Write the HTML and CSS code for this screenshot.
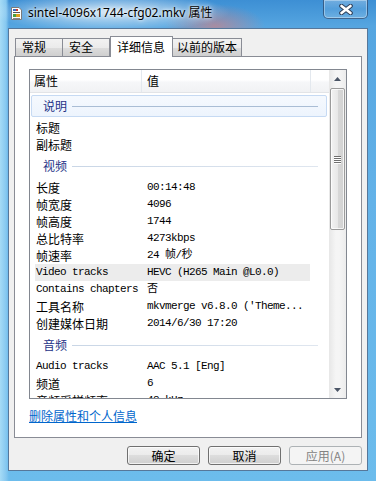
FILE: index.html
```html
<!DOCTYPE html>
<html lang="zh-CN">
<head>
<meta charset="utf-8">
<title>sintel-4096x1744-cfg02.mkv 属性</title>
<link rel="stylesheet" href="styles.css">
</head>
<body>
<div class="window">
  <div class="titlebar">
    <svg class="appicon" viewBox="0 0 13 13" width="13" height="13">
      <path d="M1.5 0.5 H9 L11.5 3 V12.5 H1.5 Z" fill="#fff" stroke="#7a7a7a"/>
      <rect x="3" y="2" width="3" height="2" fill="#3a6fc4"/>
      <rect x="6" y="2" width="2" height="2" fill="#d03a2a"/>
      <rect x="3" y="5" width="7" height="1" fill="#555"/>
      <rect x="3" y="7" width="3" height="3" fill="#4aa040"/>
      <rect x="6" y="7" width="4" height="3" fill="#e0a020"/>
      <rect x="3" y="11" width="7" height="1" fill="#888"/>
    </svg>
    <span class="title">sintel-4096x1744-cfg02.mkv 属性</span>
    <div class="close">
      <svg viewBox="0 0 14 11" width="14" height="11">
        <path d="M2.5 2 L11.5 9 M11.5 2 L2.5 9" stroke="#2d3e58" stroke-width="4.6" stroke-linecap="round"/>
        <path d="M2.5 2 L11.5 9 M11.5 2 L2.5 9" stroke="#ffffff" stroke-width="2.6" stroke-linecap="round"/>
      </svg>
    </div>
  </div>

  <div class="client">
    <div class="tabs">
      <div class="tab">常规</div>
      <div class="tab">安全</div>
      <div class="tab active">详细信息</div>
      <div class="tab wide">以前的版本</div>
    </div>

    <div class="panel">
      <div class="listview">
        <div class="lv-main">
          <div class="lv-header">
            <div class="hcol h1">属性</div>
            <div class="hcol h2">值</div>
            <div class="hcol h3"></div>
          </div>
          <div class="lv-body">
            <div class="group hot"><div class="gbox"><span class="glabel">说明</span><span class="gline"></span></div></div>
            <div class="row"><span class="c1">标题</span><span class="c2"></span></div>
            <div class="row"><span class="c1">副标题</span><span class="c2"></span></div>

            <div class="group"><div class="gbox"><span class="glabel">视频</span><span class="gline"></span></div></div>
            <div class="row"><span class="c1">长度</span><span class="c2 mono">00:14:48</span></div>
            <div class="row"><span class="c1">帧宽度</span><span class="c2 mono">4096</span></div>
            <div class="row"><span class="c1">帧高度</span><span class="c2 mono">1744</span></div>
            <div class="row"><span class="c1">总比特率</span><span class="c2 mono">4273kbps</span></div>
            <div class="row"><span class="c1">帧速率</span><span class="c2 mono">24 帧/秒</span></div>
            <div class="row sel"><span class="c1 mono">Video tracks</span><span class="c2 mono">HEVC (H265 Main @L0.0)</span></div>
            <div class="row"><span class="c1 mono">Contains chapters</span><span class="c2 mono">否</span></div>
            <div class="row"><span class="c1">工具名称</span><span class="c2 mono">mkvmerge v6.8.0 ('Theme...</span></div>
            <div class="row"><span class="c1">创建媒体日期</span><span class="c2 mono">2014/6/30 17:20</span></div>

            <div class="group"><div class="gbox"><span class="glabel">音频</span><span class="gline"></span></div></div>
            <div class="row"><span class="c1 mono">Audio tracks</span><span class="c2 mono">AAC 5.1 [Eng]</span></div>
            <div class="row"><span class="c1">频道</span><span class="c2 mono">6</span></div>
            <div class="row"><span class="c1">音频采样频率</span><span class="c2 mono">48 kHz</span></div>
          </div>
        </div>
        <div class="scrollbar">
          <div class="sb-btn">
            <svg viewBox="0 0 7 4" width="7" height="4"><path d="M0 4 L3.5 0 L7 4 Z" fill="#4b5566"/></svg>
          </div>
          <div class="sb-track">
            <div class="sb-thumb">
              <div class="grip"><span></span><span></span><span></span><span></span></div>
            </div>
          </div>
          <div class="sb-btn">
            <svg viewBox="0 0 7 4" width="7" height="4"><path d="M0 0 L7 0 L3.5 4 Z" fill="#4b5566"/></svg>
          </div>
        </div>
      </div>
      <a class="link" href="#">删除属性和个人信息</a>
    </div>

    <div class="buttons">
      <button class="btn">确定</button>
      <button class="btn">取消</button>
      <button class="btn" disabled>应用(A)</button>
    </div>
  </div>
</div>
</body>
</html>
```

FILE: styles.css
```css
* { box-sizing: border-box; }

html, body { margin: 0; padding: 0; }

body {
  width: 376px;
  height: 481px;
  overflow: hidden;
  font-family: "Noto Sans CJK SC", sans-serif;
  font-size: 12px;
  color: #000;
  background:
    radial-gradient(ellipse 120px 20px at 110px 12px, rgba(255,255,255,0.75), rgba(255,255,255,0) 100%),
    radial-gradient(ellipse 50px 22px at 215px 26px, rgba(236,120,110,0.55), rgba(236,120,110,0) 100%),
    linear-gradient(90deg, #a6dbf6 0, #86c8f0 6px, rgba(120,190,235,0) 9px),
    linear-gradient(90deg, rgba(150,215,180,0) 368px, #9ed7b8 370px, #cfe596 376px) right 170px / 10px 300px no-repeat,
    linear-gradient(180deg, #3d8fd4 0, #55a5e0 26px, #63b2e8 200px, #6cbcec 481px);
}

.window {
  width: 376px;
  height: 481px;
  display: flex;
  flex-direction: column;
}

/* ---------- title bar ---------- */
.titlebar {
  height: 28px;
  flex: none;
  display: flex;
  align-items: flex-start;
}

.appicon {
  flex: none;
  margin: 7px 0 0 10px;
}

.title {
  margin: 5px 0 0 5px;
  font-family: "Noto Sans", "Noto Sans CJK SC", sans-serif;
  font-size: 12px;
  line-height: 16px;
  color: #000;
  white-space: nowrap;
  text-shadow: 0 0 6px rgba(255,255,255,0.9), 0 0 3px rgba(255,255,255,0.9);
}

.close {
  margin-left: auto;
  margin-right: 8px;
  width: 45px;
  height: 19px;
  flex: none;
  display: flex;
  align-items: center;
  justify-content: center;
  border: 1px solid rgba(25, 45, 80, 0.6);
  border-top: none;
  border-radius: 0 0 5px 5px;
  background: linear-gradient(180deg, rgba(255,255,255,0.28), rgba(255,255,255,0.08) 50%, rgba(255,255,255,0.18));
  box-shadow: inset 0 0 0 1px rgba(255,255,255,0.35);
}

/* ---------- client ---------- */
.client {
  margin: 0 8px;
  height: 443px;
  flex: none;
  background: #f0f0f0;
  border: 1px solid #56779a;
  display: flex;
  flex-direction: column;
  padding: 7px 5px 0 5px;
}

.tabs {
  height: 20px;
  display: flex;
  align-items: flex-end;
  margin-left: 1px;
}

.tab {
  height: 18px;
  min-width: 48px;
  padding: 0 6px;
  line-height: 16px;
  border: 1px solid #898c95;
  border-bottom: none;
  background: linear-gradient(180deg, #f2f2f2 0%, #ebebeb 50%, #dddddd 50%, #cfcfcf 100%);
  white-space: nowrap;
}

.tab + .tab { margin-left: -1px; }

.tab.active {
  height: 21px;
  margin-left: 0;
  margin-bottom: -1px;
  padding: 0 7px 0 6px;
  line-height: 19px;
  background: #fff;
  position: relative;
  z-index: 1;
}

.tab.wide { padding: 0 4px; }

.panel {
  width: 348px;
  height: 382px;
  background: #fff;
  border: 1px solid #898c95;
  padding: 12px 0 0 14px;
}

/* ---------- list view ---------- */
.listview {
  width: 318px;
  height: 330px;
  border: 1px solid #828790;
  display: flex;
  background: #fff;
}

.lv-main {
  width: 299px;
  display: flex;
  flex-direction: column;
}

.lv-header {
  height: 23px;
  flex: none;
  display: flex;
  background: linear-gradient(180deg, #ffffff 0%, #ffffff 45%, #f6f7f9 55%, #f1f2f4 100%);
  border-bottom: 1px solid #e2e4e7;
}

.hcol {
  line-height: 22px;
  border-right: 1px solid #e3e8ee;
  white-space: nowrap;
}

.h1 { width: 112px; padding-left: 4px; }
.h2 { width: 169px; padding-left: 5px; }
.h3 { flex: 1; border-right: none; }

.lv-body {
  flex: 1;
  overflow: hidden;
}

.group {
  height: 26px;
  padding: 2px 2px 2px 1px;
}

.gbox {
  height: 22px;
  display: flex;
  align-items: center;
  border: 1px solid transparent;
  border-radius: 2px;
}

.group.hot .gbox {
  background: linear-gradient(180deg, #f5f9fe, #edf4fd);
  border-color: #c6daf3;
}

.glabel {
  margin-left: 11px;
  color: #1e3287;
  line-height: 16px;
}

.gline {
  flex: 1;
  height: 1px;
  margin: 1px 8px 0 5px;
  background: linear-gradient(90deg, #c9d6e6, #dfe6ef);
}

.group.hot .gline { background: #a9bdd5; }

.row {
  height: 17px;
  width: 275px;
  margin-left: 5px;
  display: flex;
  line-height: 17px;
  white-space: nowrap;
}

.row.sel { background: #ececec; }

.c1 { width: 106px; padding-left: 1px; flex: none; }
.c2 { padding-left: 6px; }

.mono {
  font-family: "Liberation Mono", "Noto Sans CJK SC", monospace;
  font-size: 11px;
  letter-spacing: -0.6px;
}

/* ---------- scrollbar ---------- */
.scrollbar {
  width: 17px;
  display: flex;
  flex-direction: column;
  background: linear-gradient(90deg, #e7e7e7, #f5f5f5 40%, #f5f5f5 60%, #ececec);
}

.sb-btn {
  height: 17px;
  flex: none;
  display: flex;
  align-items: center;
  justify-content: center;
}

.sb-track {
  flex: 1;
  padding: 1px 1px 0 1px;
}

.sb-thumb {
  height: 142px;
  border: 1px solid #9b9b9b;
  border-radius: 2px;
  background: linear-gradient(90deg, #f3f3f3 0%, #e8e8e8 50%, #d8d8d8 51%, #d2d2d2 100%);
  box-shadow: inset 0 0 0 1px rgba(255,255,255,0.75);
  display: flex;
  align-items: center;
  justify-content: center;
}

.grip {
  display: flex;
  flex-direction: column;
  gap: 1px;
}

.grip span {
  display: block;
  width: 7px;
  height: 1px;
  background: #6f6f6f;
  box-shadow: 0 1px 0 #fff;
}

/* ---------- link & buttons ---------- */
.link {
  display: block;
  width: max-content;
  margin-top: 9px;
  line-height: 16px;
  color: #0066cc;
  text-decoration: underline;
}

.buttons {
  display: flex;
  justify-content: flex-end;
  gap: 8px;
  margin-top: 8px;
}

.btn {
  width: 73px;
  height: 19px;
  padding: 0;
  font-family: "Noto Sans CJK SC", sans-serif;
  font-size: 12px;
  line-height: 16px;
  color: #000;
  border: 1px solid #707070;
  border-radius: 3px;
  background: linear-gradient(180deg, #f2f2f2 0%, #ebebeb 50%, #dddddd 50%, #cfcfcf 100%);
  box-shadow: inset 0 0 0 1px rgba(255,255,255,0.7);
}

.btn:disabled {
  color: #838383;
  border-color: #adb2b5;
  background: #f4f4f4;
  box-shadow: none;
}
```
